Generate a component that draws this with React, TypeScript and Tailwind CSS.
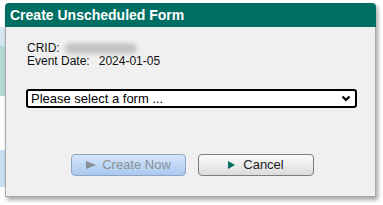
import React from 'react';

/**
 * Create Unscheduled Form dialog, shown over the page behind it.
 */
export default function App() {
  return (
    <div
      className="relative w-[383px] h-[205px] bg-white overflow-hidden"
      style={{ fontFamily: '"Liberation Sans", Arial, sans-serif' }}
    >
      {/* Page behind the dialog: strips on the left */}
      <div className="absolute left-0 top-[27px] w-[10px] h-[19px] bg-[#d4e6f4]" />
      <div className="absolute left-0 top-[46px] w-[10px] h-[50px] bg-[#b3d9d2]" />
      <div className="absolute left-0 top-[150px] w-[10px] h-[37px] bg-[#c9e0f3]" />

      {/* Dialog */}
      <div className="absolute left-[5px] top-[3px] w-[371px] h-[194px] flex flex-col rounded-t-[4px] shadow-[2px_3px_4px_rgba(0,0,0,0.35)]">
        <div className="h-[24px] bg-[#006f63] rounded-t-[4px] flex items-center pl-[5px]">
          <span className="text-white font-bold text-[14px] leading-none">Create Unscheduled Form</span>
        </div>

        <div className="flex-1 bg-[#f0f0f0] border border-t-0 border-[#a8a8a8] flex flex-col pl-[21px] pr-[18px] pt-[15px]">
          <div className="text-[12px] leading-[13px] text-[#111]">
            <div className="flex">
              <span className="w-[38px]">CRID:</span>
              <span className="w-[72px] h-[11px] mt-[1px] rounded-full bg-[#c4c4c4] blur-[2px]" />
            </div>
            <div className="flex">
              <span className="mr-[9px]">Event Date:</span>
              <span>2024-01-05</span>
            </div>
          </div>

          <div className="ml-[-1px] mt-[21px] h-[19px] bg-white border-2 border-black rounded-[3px] flex items-center justify-between pl-[3px] pr-[4px]">
            <span className="text-[13px] leading-none text-black">Please select a form ...</span>
            <svg width="10" height="7" viewBox="0 0 10 7">
              <path d="M1.5 1.5 L5 5 L8.5 1.5" fill="none" stroke="#000" strokeWidth="2.2" />
            </svg>
          </div>

          <div className="mt-[46px] flex gap-[12px] pl-[44px]">
            <button
              disabled
              className="w-[115px] h-[22px] rounded-[4px] border border-[#8ea6c4] bg-gradient-to-b from-[#d5e6fb] to-[#a9c9f0] flex items-center justify-center gap-[6px] text-[13px] text-[#8a8f96]"
            >
              <svg width="10" height="8" viewBox="0 0 10 8">
                <path d="M0 0 L10 4 L0 8 Z" fill="#8a8f96" />
              </svg>
              <span>Create Now</span>
            </button>
            <button className="w-[116px] h-[22px] rounded-[4px] border border-[#7d7d7d] bg-gradient-to-b from-[#fbfbfb] to-[#dcdcdc] flex items-center justify-center gap-[8px] text-[13px] text-[#222]">
              <svg width="7" height="8" viewBox="0 0 7 8">
                <path d="M0 0 L7 4 L0 8 Z" fill="#006f63" />
              </svg>
              <span>Cancel</span>
            </button>
          </div>
        </div>
      </div>
    </div>
  );
}
